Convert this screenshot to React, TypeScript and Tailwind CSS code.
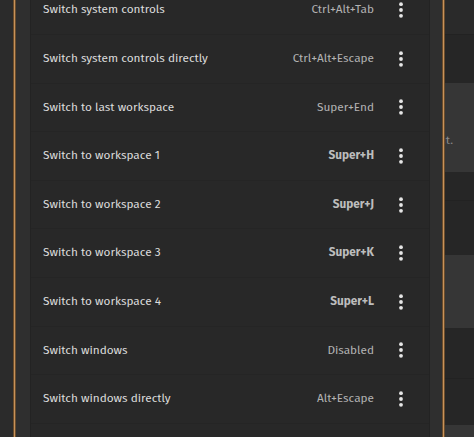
import React from "react";

const rows: { label: string; key: string; bold?: boolean }[] = [
  { label: "Switch system controls", key: "Ctrl+Alt+Tab" },
  { label: "Switch system controls directly", key: "Ctrl+Alt+Escape" },
  { label: "Switch to last workspace", key: "Super+End" },
  { label: "Switch to workspace 1", key: "Super+H", bold: true },
  { label: "Switch to workspace 2", key: "Super+J", bold: true },
  { label: "Switch to workspace 3", key: "Super+K", bold: true },
  { label: "Switch to workspace 4", key: "Super+L", bold: true },
  { label: "Switch windows", key: "Disabled" },
  { label: "Switch windows directly", key: "Alt+Escape" },
  { label: "", key: "" },
];

function Kebab() {
  return (
    <svg width="6" height="16" viewBox="0 0 6 16" className="shrink-0">
      <circle cx="3" cy="2.2" r="1.9" fill="#e6e6e6" />
      <circle cx="3" cy="8" r="1.9" fill="#e6e6e6" />
      <circle cx="3" cy="13.8" r="1.9" fill="#e6e6e6" />
    </svg>
  );
}

export default function App() {
  return (
    <div
      className="w-[474px] h-[437px] overflow-hidden flex bg-[#2a2a2a]"
      style={{ fontFamily: '"Fira Sans", "Noto Sans", "Open Sans", sans-serif' }}
    >
      <div className="w-[13px] shrink-0 bg-[#2b2b2b]" />
      <div className="w-[3px] shrink-0 bg-[#c8925a] border-x border-[#6b4d2c]" />
      <div className="w-[426px] shrink-0 bg-[#2f2f2f] pl-[14px] pr-[12px]">
        <div className="mt-[-13.5px] bg-[#282828] border-x border-[#232323]">
          {rows.map((r, i) => (
            <div
              key={i}
              className="h-[48.6px] flex items-center pl-[12px] pr-[25px] border-b border-[#252525]"
            >
              <span className="flex-1 text-[11.8px] text-[#dcdcdc]">{r.label}</span>
              {r.key && (
                <>
                  <span
                    className={
                      r.bold
                        ? "text-[11.8px] font-bold text-[#bdbdbd] mr-[24px]"
                        : "text-[11.8px] text-[#b3b3b3] mr-[24px]"
                    }
                  >
                    {r.key}
                  </span>
                  <Kebab />
                </>
              )}
            </div>
          ))}
        </div>
      </div>
      <div className="w-[3px] shrink-0 bg-[#c8925a] border-x border-[#6b4d2c]" />
      <div className="flex-1 flex flex-col">
        <div className="h-[35px] bg-[#2a2a2a] border-b border-[#222]" />
        <div className="h-[48px] bg-[#262626]" />
        <div className="h-[89px] bg-[#363636] flex items-center overflow-hidden">
          <span className="text-[11.8px] text-[#8a8a8a] ml-[-6px] mt-[26px]">ut.</span>
        </div>
        <div className="h-[29px] bg-[#262626] border-b border-[#222]" />
        <div className="h-[54px] bg-[#262626]" />
        <div className="h-[73px] bg-[#363636]" />
        <div className="h-[51px] bg-[#262626] border-b border-[#222]" />
        <div className="h-[46px] bg-[#262626]" />
        <div className="flex-1 bg-[#363636]" />
      </div>
    </div>
  );
}
